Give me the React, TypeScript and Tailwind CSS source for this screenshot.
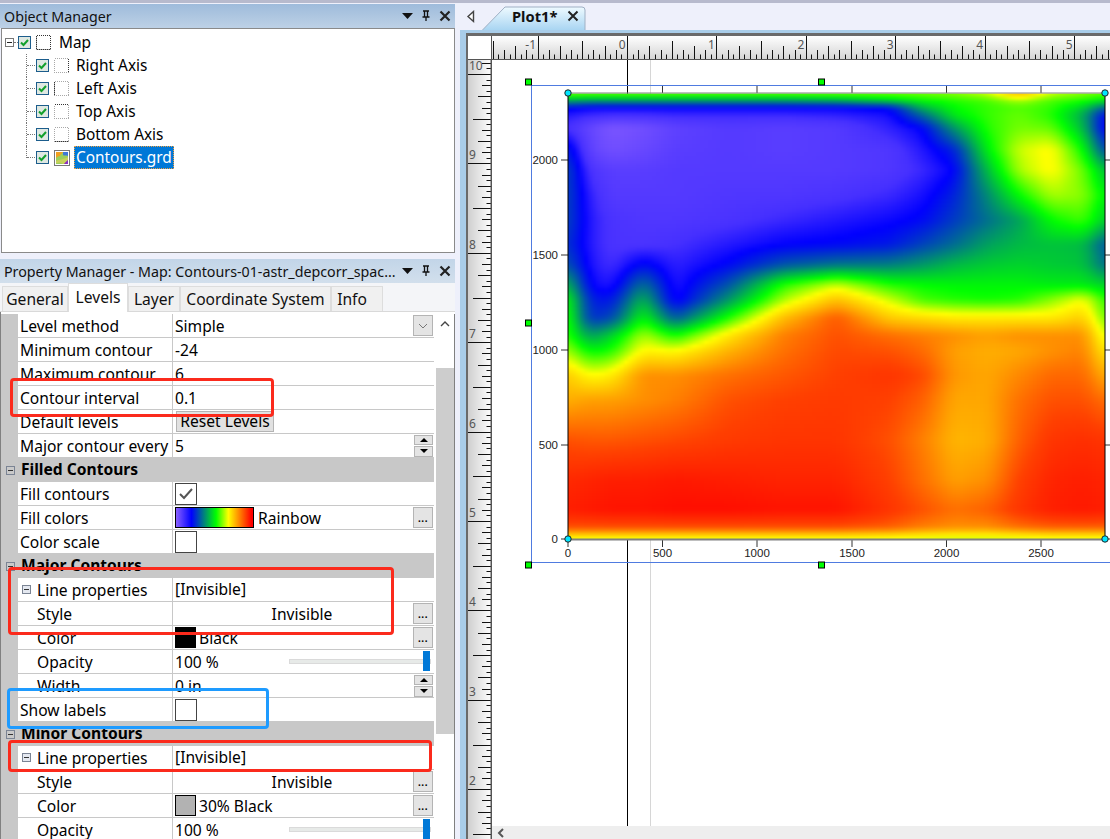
import type { ReactNode } from "react";

const FONT = "font-['Noto_Sans','Open_Sans',sans-serif]";

// heat map samples, read off the plot: 0 purple, 20 blue, 50 green, 65 yellow, 100 red
const U = [0, 0.04, 0.08, 0.14, 0.2, 0.3, 0.4, 0.5, 0.6, 0.66, 0.72, 0.78, 0.84, 0.9, 0.96, 1];
const GRID: [number, number[]][] = [
  [94, [56, 56, 56, 56, 56, 56, 56, 56, 56, 57, 58, 62, 76, 62, 58, 56]],
  [100, [42, 40, 40, 40, 40, 40, 40, 42, 48, 50, 52, 54, 60, 54, 52, 48]],
  [107, [22, 20, 20, 20, 20, 20, 20, 20, 22, 42, 50, 53, 55, 53, 45, 32]],
  [115, [17, 15, 14, 14, 15, 15, 15, 16, 18, 32, 48, 53, 56, 52, 40, 20]],
  [128, [14, 8, 3, 5, 9, 11, 10, 11, 16, 20, 38, 52, 57, 56, 42, 18]],
  [150, [24, 9, 5, 7, 10, 11, 10, 11, 12, 17, 24, 48, 62, 66, 50, 28]],
  [170, [28, 13, 10, 10, 11, 11, 11, 11, 12, 15, 20, 42, 60, 66, 56, 42]],
  [195, [28, 16, 11, 11, 11, 12, 12, 13, 15, 18, 24, 36, 50, 60, 58, 48]],
  [220, [28, 17, 13, 12, 12, 13, 15, 17, 19, 21, 27, 33, 39, 50, 54, 44]],
  [245, [26, 17, 13, 13, 14, 17, 20, 21, 23, 28, 33, 39, 42, 43, 42, 30]],
  [265, [30, 18, 14, 22, 16, 21, 30, 34, 35, 38, 42, 44, 45, 44, 43, 33]],
  [285, [42, 20, 17, 34, 17, 30, 52, 62, 52, 50, 49, 49, 49, 48, 48, 45]],
  [300, [50, 24, 22, 42, 18, 38, 60, 74, 62, 54, 52, 51, 52, 58, 65, 52]],
  [318, [52, 26, 28, 50, 30, 52, 74, 87, 72, 70, 68, 68, 68, 68, 72, 56]],
  [335, [53, 38, 44, 60, 50, 68, 82, 88, 84, 82, 80, 78, 80, 80, 80, 62]],
  [352, [60, 50, 52, 67, 66, 76, 84, 89, 88, 85, 78, 76, 77, 80, 82, 68]],
  [375, [72, 65, 67, 80, 80, 84, 87, 90, 92, 89, 79, 77, 81, 85, 85, 76]],
  [400, [76, 78, 78, 80, 82, 88, 90, 91, 90, 86, 77, 77, 84, 88, 88, 84]],
  [440, [88, 87, 87, 88, 89, 91, 92, 92, 88, 82, 75, 76, 86, 92, 93, 92]],
  [480, [94, 95, 96, 96, 97, 96, 95, 95, 90, 84, 78, 80, 90, 95, 96, 95]],
  [510, [96, 97, 98, 98, 99, 99, 98, 98, 92, 88, 84, 86, 92, 96, 97, 96]],
  [528, [88, 88, 88, 88, 88, 88, 88, 88, 86, 82, 80, 80, 84, 86, 86, 86]],
  [535, [72, 72, 72, 72, 72, 72, 72, 72, 70, 68, 66, 66, 68, 70, 70, 70]],
  [539, [62, 62, 62, 62, 62, 62, 62, 62, 62, 62, 62, 62, 62, 62, 62, 62]],
];

const RAMP: [number, number, number, number][] = [
  [0, 138, 96, 255],
  [14, 70, 48, 255],
  [20, 0, 0, 255],
  [50, 0, 255, 0],
  [65, 255, 255, 0],
  [78, 255, 160, 0],
  [90, 255, 64, 0],
  [100, 255, 8, 0],
];

function rampColor(v: number) {
  for (let i = 1; i < RAMP.length; i++) {
    if (v <= RAMP[i][0]) {
      const a = RAMP[i - 1];
      const b = RAMP[i];
      const t = Math.max(0, (v - a[0]) / (b[0] - a[0]));
      return `rgb(${a[1] + (b[1] - a[1]) * t | 0},${a[2] + (b[2] - a[2]) * t | 0},${a[3] + (b[3] - a[3]) * t | 0})`;
    }
  }
  return "rgb(255,8,0)";
}

function sample(x: number, y: number) {
  const u = Math.min(1, Math.max(0, (x - 568) / 537));
  const yy = Math.min(539, Math.max(94, y));
  let c = 0;
  while (c < U.length - 2 && u > U[c + 1]) c++;
  let r = 0;
  while (r < GRID.length - 2 && yy > GRID[r + 1][0]) r++;
  const tx = (u - U[c]) / (U[c + 1] - U[c]);
  const ty = (yy - GRID[r][0]) / (GRID[r + 1][0] - GRID[r][0]);
  const top = GRID[r][1][c] * (1 - tx) + GRID[r][1][c + 1] * tx;
  const bot = GRID[r + 1][1][c] * (1 - tx) + GRID[r + 1][1][c + 1] * tx;
  return top * (1 - ty) + bot * ty;
}

// averages the samples first so the bilinear creases don't show in the colours
function smooth(x: number, y: number) {
  let sum = 0;
  for (const dx of [-8, -4, 0, 4, 8]) {
    for (const dy of [-3, 0, 3]) {
      sum += sample(x + dx, y + dy);
    }
  }
  return sum / 15;
}

function HeatMap() {
  const cells: ReactNode[] = [];
  for (let y = 84; y < 548; y += 4) {
    for (let x = 556; x < 1116; x += 4) {
      cells.push(<rect key={`${x}-${y}`} x={x} y={y} width={4.5} height={4.5} fill={rampColor(smooth(x + 2, y + 2))} />);
    }
  }
  return (
    <g clipPath="url(#plot-clip)">
      <g filter="url(#plot-blur)" shapeRendering="crispEdges">
        {cells}
      </g>
    </g>
  );
}

function rulerTicks(origin: number, from: number, to: number) {
  const step = 89.4 / 16;
  const ticks: { pos: number; len: number }[] = [];
  for (let i = Math.floor((from - origin) / step); i * step + origin < to; i++) {
    const n = ((i % 16) + 16) % 16;
    const len = n === 0 ? 24 : n === 8 ? 18 : n % 4 === 0 ? 13 : n % 2 === 0 ? 9 : 4.5;
    ticks.push({ pos: Math.round(origin + i * step) + 0.5, len });
  }
  return ticks;
}

function TopRuler() {
  return (
    <svg width="618" height="24" viewBox="492 36 618 24" className="block">
      <defs>
        <linearGradient id="hr" x1="0" y1="0" x2="0" y2="1">
          <stop offset="0" stopColor="#ffffff" />
          <stop offset="1" stopColor="#d2d2d2" />
        </linearGradient>
      </defs>
      <rect x="492" y="36" width="618" height="24" fill="url(#hr)" />
      {rulerTicks(627, 492, 1110).map((t) => (
        <line key={t.pos} x1={t.pos} x2={t.pos} y1={59} y2={59 - t.len} stroke="#111" />
      ))}
      <rect x="492" y="59" width="618" height="1.5" fill="#555" />
      {[-1, 0, 1, 2, 3, 4, 5].map((n) => (
        <text key={n} x={627 + n * 89.4 - 1.5} y={49} textAnchor="end" fontSize="12" fontFamily="Noto Sans, sans-serif" fill="#555">
          {n}
        </text>
      ))}
    </svg>
  );
}

function LeftRuler() {
  return (
    <svg width="24" height="779" viewBox="468 60 24 779" className="block shrink-0">
      <defs>
        <linearGradient id="vr" x1="0" y1="0" x2="1" y2="0">
          <stop offset="0" stopColor="#cfcfcf" />
          <stop offset="1" stopColor="#ffffff" />
        </linearGradient>
      </defs>
      <rect x="468" y="60" width="24" height="779" fill="url(#vr)" />
      {rulerTicks(74, 60, 839).map((t) => (
        <line key={t.pos} x1={491} x2={491 - t.len} y1={t.pos} y2={t.pos} stroke="#111" />
      ))}
      <rect x="490.5" y="60" width="1.5" height="779" fill="#555" />
      {[10, 9, 8, 7, 6, 5, 4, 3, 2].map((n, i) => (
        <text key={n} x={469} y={74 + i * 89.4 - 4} fontSize="12" fontFamily="Noto Sans, sans-serif" fill="#555">
          {n}
        </text>
      ))}
    </svg>
  );
}

function PlotCanvas() {
  const handles = [
    [528.5, 82],
    [821.5, 82],
    [528.5, 323],
    [528.5, 565],
    [821.5, 565],
  ];
  const corners = [
    [568, 93],
    [1105, 93],
    [568, 539],
    [1105, 539],
  ];
  const xTicks = [
    [568, "0"],
    [662.5, "500"],
    [757, "1000"],
    [852, "1500"],
    [946.5, "2000"],
    [1041, "2500"],
  ] as const;
  const yTicks = [
    [539, "0"],
    [445, "500"],
    [350, "1000"],
    [255, "1500"],
    [160, "2000"],
  ] as const;
  return (
    <svg width="618" height="766" viewBox="492 60 618 766" className="block">
      <defs>
        <clipPath id="plot-clip">
          <rect x="568" y="93.5" width="537" height="446" />
        </clipPath>
        <filter id="plot-blur" x="0" y="0" width="1" height="1" colorInterpolationFilters="sRGB">
          <feGaussianBlur stdDeviation="1.6" />
        </filter>
      </defs>
      <rect x="492" y="60" width="618" height="766" fill="#fff" />
      <line x1="650.5" x2="650.5" y1="60" y2="826" stroke="#d6d6d6" />
      <line x1="627.5" x2="627.5" y1="60" y2="826" stroke="#000" />
      <path d="M1110 85.5H531.5V562.5H1110" fill="none" stroke="#4f7be0" />
      <HeatMap />
      {xTicks.map(([x, label]) => (
        <g key={label}>
          {x > 600 && <line x1={x} x2={x} y1={86} y2={93} stroke="#333" />}
          <line x1={x} x2={x} y1={540} y2={547} stroke="#333" />
          <text x={x} y={557} textAnchor="middle" fontSize="11.5" fontFamily="Liberation Sans, sans-serif" fill="#222">
            {label}
          </text>
        </g>
      ))}
      {yTicks.map(([y, label]) => (
        <g key={label}>
          <line x1={561} x2={568} y1={y} y2={y} stroke="#777" strokeWidth="1.5" />
          <line x1={1105} x2={1110} y1={y} y2={y} stroke="#777" strokeWidth="1.5" />
          <text x={558} y={y + 4} textAnchor="end" fontSize="11.5" fontFamily="Liberation Sans, sans-serif" fill="#222">
            {label}
          </text>
        </g>
      ))}
      <line x1="568" x2="1105" y1="93" y2="93" stroke="#808080" />
      <line x1="568" x2="1105" y1="539.5" y2="539.5" stroke="#808080" strokeWidth="2" />
      <line x1="568" x2="568" y1="93" y2="539" stroke="#000" />
      <line x1="1105" x2="1105" y1="93" y2="539" stroke="#000" />
      {handles.map(([x, y]) => (
        <rect key={`${x}-${y}`} x={x - 3} y={y - 3} width="6" height="6" fill="#00ff00" stroke="#000" />
      ))}
      {corners.map(([x, y]) => (
        <circle key={`${x}-${y}`} cx={x} cy={y} r="3.2" fill="#00e6ff" stroke="#222" />
      ))}
    </svg>
  );
}

function WindowButtons() {
  return (
    <svg width="50" height="12" viewBox="0 0 50 12">
      <path d="M0 3h11L5.5 9z" fill="#111" />
      <path d="M21 1h6M22.5 1v6M25.5 1v6M20.5 7h7M24 7v4" stroke="#111" strokeWidth="1.3" fill="none" />
      <path d="M38.5 1.5l9 9M47.5 1.5l-9 9" stroke="#222" strokeWidth="2.2" fill="none" />
    </svg>
  );
}

function TitleBar({ title, className }: { title: string; className: string }) {
  return (
    <div className={`flex items-center pl-[4px] pr-[3px] text-[14.25px] text-[#111] ${className}`}>
      <span className="flex-1 whitespace-nowrap pt-[2px]">{title}</span>
      <WindowButtons />
    </div>
  );
}

function TreeCheck() {
  return (
    <svg width="13" height="13" viewBox="0 0 13 13" className="shrink-0">
      <rect x="0.5" y="0.5" width="12" height="12" fill="#dfe8e2" stroke="#1c5d8c" />
      <path d="M3 6.5l2.5 2.5 4.5-5" stroke="#12a02c" strokeWidth="2" fill="none" />
    </svg>
  );
}

function AxisIcon({ dark }: { dark: string }) {
  return (
    <svg width="15" height="15" viewBox="0 0 15 15" className="shrink-0" shapeRendering="crispEdges">
      <rect x="0.5" y="0.5" width="14" height="14" fill="#fff" stroke="#a8a8a8" strokeDasharray="1 1" />
      <path d={dark} stroke="#333" strokeDasharray="1 1" fill="none" />
    </svg>
  );
}

function GridIcon() {
  return (
    <svg width="16" height="16" viewBox="0 0 16 16" className="shrink-0">
      <rect x="0.5" y="0.5" width="15" height="15" fill="#fff" stroke="#777" />
      <path d="M2 2h12v12H2z" fill="#9ccf5a" />
      <path d="M2 2h7c-1 2-3 2-3 4-2 0-3 1-4 2z" fill="#f0a020" />
      <path d="M9 2h5v4c-2-1-4 0-5-1z" fill="#3f78d8" />
      <path d="M2 11c3-2 7-1 12-4v7H9c-2-2-5-1-7-1z" fill="#c8d05a" />
      <path d="M10 14c1-2 3-3 4-4v4z" fill="#8a2fc0" />
    </svg>
  );
}

function TreeRow({ icon, label, selected, last }: { icon: ReactNode; label: string; selected?: boolean; last?: boolean }) {
  return (
    <div className="relative flex h-[23px] items-center pl-[34px]">
      <div className={`absolute left-[24px] top-0 w-0 border-l border-dotted border-[#777] ${last ? "h-[12px]" : "h-full"}`} />
      <div className="absolute left-[25px] top-[11px] w-[8px] border-t border-dotted border-[#777]" />
      <TreeCheck />
      <span className="ml-[5px]">{icon}</span>
      <span
        className={`flex h-[23px] items-center text-[15.4px] ${
          selected ? "ml-[4px] border border-dotted border-[#f0a040] bg-[#0078d7] px-px text-white" : "ml-[5px] px-[2px] text-black"
        }`}
      >
        {label}
      </span>
    </div>
  );
}

function ObjectManager() {
  return (
    <div className="ml-[1px] h-[225px] border border-[#8a8a8a] bg-white pt-[2px]">
      <div className="flex h-[23px] items-center pl-[3px]">
        <span className="flex h-[9px] w-[9px] items-center justify-center border border-[#777] bg-white">
          <span className="h-px w-[5px] bg-[#222]" />
        </span>
        <span className="w-[4px] border-t border-dotted border-[#777]" />
        <TreeCheck />
        <span className="ml-[5px]">
          <AxisIcon dark="M.5 14.5h14M14.5 .5v14M.5 .5h14M.5 .5v14" />
        </span>
        <span className="ml-[8px] text-[15.4px] text-black">Map</span>
      </div>
      <TreeRow icon={<AxisIcon dark="M14.5 .5v14" />} label="Right Axis" />
      <TreeRow icon={<AxisIcon dark="M.5 .5v14" />} label="Left Axis" />
      <TreeRow icon={<AxisIcon dark="M.5 .5h14" />} label="Top Axis" />
      <TreeRow icon={<AxisIcon dark="M.5 14.5h14" />} label="Bottom Axis" />
      <TreeRow icon={<GridIcon />} label="Contours.grd" selected last />
    </div>
  );
}

function MinusBox({ tint = "bg-[#c9c9c9]" }: { tint?: string }) {
  return (
    <span className={`flex h-[9px] w-[9px] shrink-0 items-center justify-center border border-[#7b8494] ${tint}`}>
      <span className="h-px w-[5px] bg-[#333]" />
    </span>
  );
}

function DotsButton() {
  return (
    <button className="ml-auto mr-px flex h-[21px] w-[20px] shrink-0 items-end justify-center border border-[#b4b4b4] bg-[#e4e4e4] pb-[4px] text-[10px] font-bold leading-none text-black">
      <span className="tracking-[0.5px]">...</span>
    </button>
  );
}

function Spinner() {
  return (
    <div className="ml-auto mr-px flex h-[22px] w-[19px] shrink-0 flex-col gap-px">
      <span className="flex flex-1 items-center justify-center border border-[#b4b4b4] bg-[#e4e4e4]">
        <span className="h-0 w-0 border-x-[4px] border-b-[4px] border-x-transparent border-b-black" />
      </span>
      <span className="flex flex-1 items-center justify-center border border-[#b4b4b4] bg-[#e4e4e4]">
        <span className="h-0 w-0 border-x-[4px] border-t-[4px] border-x-transparent border-t-black" />
      </span>
    </div>
  );
}

function Slider() {
  return (
    <div className="relative ml-auto mr-[3px] h-[5px] w-[142px] border border-[#dadada] bg-[#e7eae8]">
      <div className="absolute right-0 top-[-9px] h-[20px] w-[7px] bg-[#0078d7]" />
    </div>
  );
}

function Swatch({ className }: { className: string }) {
  return <span className={`h-[21px] w-[21px] shrink-0 ${className}`} />;
}

function Checkbox({ checked }: { checked?: boolean }) {
  return (
    <span className="flex h-[22px] w-[22px] shrink-0 items-center justify-center border border-[#444] bg-white">
      {checked && (
        <svg width="14" height="12" viewBox="0 0 14 12">
          <path d="M1 6l4 4 8-9" stroke="#555" strokeWidth="2" fill="none" />
        </svg>
      )}
    </span>
  );
}

function Section({ title }: { title: string }) {
  return (
    <div className="flex h-6 bg-[#c8c8c8]">
      <div className="flex w-[20px] items-center pl-[5px]">
        <MinusBox />
      </div>
      <span className="text-[15.6px] font-bold leading-[22px] text-black">{title}</span>
    </div>
  );
}

function Row({
  name,
  indent,
  toggle,
  children,
}: {
  name: string;
  indent?: boolean;
  toggle?: boolean;
  children?: ReactNode;
}) {
  return (
    <div className="flex h-6">
      <div className="w-[17px] shrink-0 bg-[#c8c8c8]" />
      <div className={`flex w-[155px] shrink-0 items-center whitespace-nowrap border-b border-r border-[#c8c8c8] ${indent ? "pl-[19px]" : "pl-[2px]"}`}>
        {toggle && (
          <span className="-ml-[15px] mr-[6px]">
            <MinusBox tint="bg-[#e4e8f0]" />
          </span>
        )}
        <span className="pt-[2px]">{name}</span>
      </div>
      <div className="flex min-w-0 flex-1 items-center whitespace-nowrap border-b border-[#c8c8c8] pl-[2px]">{children}</div>
    </div>
  );
}

function Val({ children, className = "" }: { children: ReactNode; className?: string }) {
  return <span className={`pt-[2px] ${className}`}>{children}</span>;
}

function PropertyGrid() {
  return (
    <div className="flex min-h-0 flex-1 border-l border-[#808080] bg-white pt-[2px] text-[15.6px] text-black">
      <div className="w-[433px] shrink-0">
        <Row name="Level method">
          <Val>Simple</Val>
          <span className="ml-auto mr-px flex h-[21px] w-[20px] items-center justify-center border border-[#b4b4b4] bg-[#e4e4e4]">
            <svg width="10" height="6" viewBox="0 0 10 6">
              <path d="M1 1l4 4 4-4" stroke="#777" fill="none" />
            </svg>
          </span>
        </Row>
        <Row name="Minimum contour">
          <Val>-24</Val>
        </Row>
        <Row name="Maximum contour">
          <Val>6</Val>
        </Row>
        <Row name="Contour interval">
          <Val>0.1</Val>
        </Row>
        <Row name="Default levels">
          <button className="ml-px flex h-[21px] w-[98px] items-center justify-center border border-[#b4b4b4] bg-[#e1e1e1] pt-px">Reset Levels</button>
        </Row>
        <Row name="Major contour every">
          <Val>5</Val>
          <Spinner />
        </Row>
        <Section title="Filled Contours" />
        <Row name="Fill contours">
          <Checkbox checked />
        </Row>
        <Row name="Fill colors">
          <span className="h-[21px] w-[79px] shrink-0 border border-black bg-[linear-gradient(90deg,#8a60ff_0%,#0000ff_20%,#00ff00_52%,#ffff00_68%,#ff0000_98%)]" />
          <Val className="ml-[4px]">Rainbow</Val>
          <DotsButton />
        </Row>
        <Row name="Color scale">
          <Checkbox />
        </Row>
        <Section title="Major Contours" />
        <Row name="Line properties" indent toggle>
          <span>[Invisible]</span>
        </Row>
        <Row name="Style" indent>
          <Val className="flex-1 pl-[16px] text-center">Invisible</Val>
          <DotsButton />
        </Row>
        <Row name="Color" indent>
          <Swatch className="bg-black" />
          <Val className="ml-[3px]">Black</Val>
          <DotsButton />
        </Row>
        <Row name="Opacity" indent>
          <Val>100 %</Val>
          <Slider />
        </Row>
        <Row name="Width" indent>
          <Val>0 in</Val>
          <Spinner />
        </Row>
        <Row name="Show labels">
          <Checkbox />
        </Row>
        <Section title="Minor Contours" />
        <Row name="Line properties" indent toggle>
          <span>[Invisible]</span>
        </Row>
        <Row name="Style" indent>
          <Val className="flex-1 pl-[16px] text-center">Invisible</Val>
          <DotsButton />
        </Row>
        <Row name="Color" indent>
          <Swatch className="border border-black bg-[#b2b2b2]" />
          <Val className="ml-[3px]">30% Black</Val>
          <DotsButton />
        </Row>
        <Row name="Opacity" indent>
          <Val>100 %</Val>
          <Slider />
        </Row>
      </div>
      <div className="ml-[2px] flex w-[19px] shrink-0 flex-col items-center border-r border-[#808080]">
        <svg width="10" height="6" viewBox="0 0 10 6" className="mt-[7px]">
          <path d="M1 5l4-4 4 4" stroke="#444" strokeWidth="1.4" fill="none" />
        </svg>
        <div className="mt-[41px] h-[366px] w-full bg-[#cdcdcd]" />
      </div>
    </div>
  );
}

function Tab({ label, active, className }: { label: string; active?: boolean; className: string }) {
  return (
    <div
      className={`flex items-center justify-center border-x border-t border-[#dddddd] ${className} ${
        active ? "mb-[-1px] h-[29px] bg-white pb-px" : "mt-[3px] h-[25px] bg-[#f0f0f0] pt-[2px]"
      }`}
    >
      {label}
    </div>
  );
}

function Markers() {
  return (
    <>
      <div className="absolute left-[10px] top-[378px] h-[39px] w-[264px] rounded-[4px] border-[3px] border-[#fb2a1c]" />
      <div className="absolute left-[8px] top-[567px] h-[68px] w-[386px] rounded-[4px] border-[3px] border-[#fb2a1c]" />
      <div className="absolute left-[8px] top-[740px] h-[32px] w-[424px] rounded-[4px] border-[3px] border-[#fb2a1c]" />
      <div className="absolute left-[7px] top-[688px] h-[41px] w-[262px] rounded-[4px] border-[3px] border-[#1e9bff]" />
    </>
  );
}

function PlotTab() {
  return (
    <div className="relative flex h-[27px] shrink-0 bg-[#eef0fb]">
      <svg width="10" height="14" viewBox="0 0 10 14" className="ml-[11px] mt-[7px]">
        <path d="M7.5 1.5v10L2 6.5z" fill="#fff" stroke="#444" strokeWidth="1.4" />
      </svg>
      <div className="relative ml-[6px] h-[27px] w-[104px]">
        <svg width="104" height="27" viewBox="0 0 104 27" className="absolute inset-0">
          <defs>
            <linearGradient id="tab" x1="0" y1="0" x2="0" y2="1">
              <stop offset="0" stopColor="#eefaff" />
              <stop offset="1" stopColor="#a9d5f2" />
            </linearGradient>
          </defs>
          <path d="M0.5 27L23 4H100q3 0 3 3V27" fill="url(#tab)" stroke="#9fb0c4" />
        </svg>
        <span className="absolute left-[30px] top-[2px] text-[14.7px] font-bold text-[#111]">Plot1*</span>
        <svg width="12" height="12" viewBox="0 0 12 12" className="absolute left-[85px] top-[7px]">
          <path d="M1.5 1.5l9 9M10.5 1.5l-9 9" stroke="#222" strokeWidth="2" />
        </svg>
      </div>
    </div>
  );
}

export default function App() {
  return (
    <div className={`relative flex h-[839px] w-[1110px] flex-col overflow-hidden bg-[#eef0fb] ${FONT}`}>
      <div className="h-[3px] shrink-0 bg-[#b7bacd]" />
      <div className="flex min-h-0 flex-1">
        <div className="flex w-[455px] shrink-0 flex-col">
          <TitleBar title="Object Manager" className="mt-px h-[24px] shrink-0 bg-[linear-gradient(180deg,#9ebbdb,#bdd1e6)]" />
          <ObjectManager />
          <div className="h-[6px] shrink-0" />
          <TitleBar title="Property Manager - Map: Contours-01-astr_depcorr_spac..." className="h-[24px] shrink-0 bg-[linear-gradient(180deg,#c2d5e8,#d2dfec)]" />
          <div className="flex h-[29px] shrink-0 border-b border-[#d9d9d9] bg-[#f4f5f8] pl-[2px] text-[15.6px] text-[#111]">
            <Tab label="General" className="w-[66px]" />
            <Tab label="Levels" active className="w-[60px]" />
            <Tab label="Layer" className="w-[52px]" />
            <Tab label="Coordinate System" className="w-[151px]" />
            <Tab label="Info" className="w-[52px] pr-[10px]" />
          </div>
          <PropertyGrid />
        </div>
        <div className="flex min-w-0 flex-1 flex-col">
          <PlotTab />
          <div className="flex min-h-0 flex-1 flex-col pl-[5px]">
            <div className="flex min-h-0 flex-1 flex-col bg-[#a9cde9] pl-[6px] pt-[3px]">
              <div className="flex min-h-0 flex-1 flex-col border-l-[2px] border-t-[3px] border-[#6a6a6a] bg-white">
                <div className="flex h-[24px] shrink-0">
                  <div className="h-[24px] w-[24px] shrink-0 border-b-[1.5px] border-r-[1.5px] border-[#555] bg-white" />
                  <TopRuler />
                </div>
                <div className="flex min-h-0 flex-1">
                  <LeftRuler />
                  <div className="flex min-w-0 flex-1 flex-col">
                    <PlotCanvas />
                    <div className="flex h-[13px] shrink-0 items-center bg-[#eeeeee] pl-[5px]">
                      <svg width="8" height="10" viewBox="0 0 8 10">
                        <path d="M6 1L2 5l4 4" stroke="#555" strokeWidth="2" fill="none" />
                      </svg>
                    </div>
                  </div>
                </div>
              </div>
            </div>
          </div>
        </div>
      </div>
      <Markers />
    </div>
  );
}
